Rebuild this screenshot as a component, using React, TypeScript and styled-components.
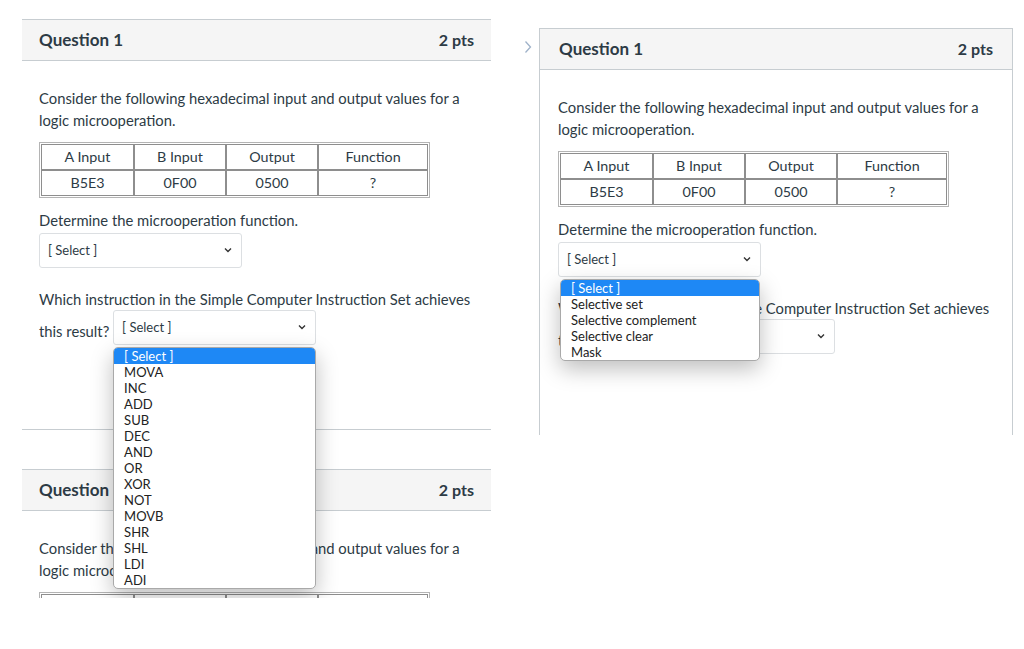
import styled, { createGlobalStyle } from "styled-components";

const GlobalStyle = createGlobalStyle`
  body {
    margin: 0;
    background: #ffffff;
  }
`;

const functionOptions = [
  "[ Select ]",
  "Selective set",
  "Selective complement",
  "Selective clear",
  "Mask",
];

const instructionOptions = [
  "[ Select ]",
  "MOVA",
  "INC",
  "ADD",
  "SUB",
  "DEC",
  "AND",
  "OR",
  "XOR",
  "NOT",
  "MOVB",
  "SHR",
  "SHL",
  "LDI",
  "ADI",
];

const Chevron = () => (
  <svg width="8" height="6" viewBox="0 0 8 6">
    <polyline
      points="1,1.5 4,4.5 7,1.5"
      fill="none"
      stroke="#333"
      strokeWidth="1.4"
    />
  </svg>
);

type SelectProps = {
  options?: string[];
  listOffset?: number;
  listWidth?: number;
  inline?: boolean;
};

const Select = ({ options, listOffset = 0, listWidth, inline }: SelectProps) => (
  <SelectWrap $inline={inline}>
    <SelectBox>
      <span>[ Select ]</span>
      <Chevron />
    </SelectBox>
    {options && (
      <OptionList $left={listOffset} $width={listWidth}>
        {options.map((o, i) => (
          <OptionItem key={o} $active={i === 0}>
            {o}
          </OptionItem>
        ))}
      </OptionList>
    )}
  </SelectWrap>
);

const ValuesTable = () => (
  <Table>
    <colgroup>
      <col style={{ width: 93 }} />
      <col style={{ width: 92 }} />
      <col style={{ width: 92 }} />
      <col style={{ width: 110 }} />
    </colgroup>
    <tbody>
      <tr>
        <Cell>A Input</Cell>
        <Cell>B Input</Cell>
        <Cell>Output</Cell>
        <Cell>Function</Cell>
      </tr>
      <tr>
        <Cell>B5E3</Cell>
        <Cell>0F00</Cell>
        <Cell>0500</Cell>
        <Cell>?</Cell>
      </tr>
    </tbody>
  </Table>
);

type QuestionProps = {
  framed?: boolean;
  openFunction?: boolean;
  openInstruction?: boolean;
};

const QuestionOne = ({ framed, openFunction, openInstruction }: QuestionProps) => (
  <Panel $framed={framed}>
    <Header $pad={framed ? 19 : 17}>
      <Title>Question 1</Title>
      <Points>2 pts</Points>
    </Header>
    <Body $pad={framed ? 18 : 17}>
      <Text>
        Consider the following hexadecimal input and output values for a
        logic microoperation.
      </Text>
      <ValuesTable />
      <Prompt>Determine the microoperation function.</Prompt>
      <Select
        options={openFunction ? functionOptions : undefined}
        listOffset={2}
        listWidth={200}
      />
      <Question>
        Which instruction in the Simple Computer Instruction Set achieves
        this result?{" "}
        <Select
          inline
          options={openInstruction ? instructionOptions : undefined}
        />
      </Question>
    </Body>
  </Panel>
);

export default function App() {
  return (
    <>
      <GlobalStyle />
      <Page>
        <LeftShot>
          <QuestionOne openInstruction />
          <NextPanel>
            <Header $pad={17}>
              <Title>Question 2</Title>
              <Points>2 pts</Points>
            </Header>
            <Body $pad={17}>
              <Text>
                Consider the following hexadecimal input and output values for
                a logic microoperation.
              </Text>
              <ValuesTable />
            </Body>
          </NextPanel>
        </LeftShot>
        <RightShot>
          <Expander>
            <svg width="8" height="14" viewBox="0 0 8 14">
              <polyline
                points="1.5,1.5 6.5,7 1.5,12.5"
                fill="none"
                stroke="#9fb2c9"
                strokeWidth="1.3"
              />
            </svg>
          </Expander>
          <QuestionOne framed openFunction />
        </RightShot>
      </Page>
    </>
  );
}

const Page = styled.div`
  display: flex;
  align-items: flex-start;
  font-family: Lato, "Open Sans", sans-serif;
  color: #2d3b45;
`;

const LeftShot = styled.div`
  margin: 19px 0 0 22px;
  width: 469px;
  height: 579px;
  overflow: hidden;
`;

const RightShot = styled.div`
  display: flex;
  margin: 28px 0 0 24px;
  height: 407px;
  overflow: hidden;
`;

const Expander = styled.div`
  width: 24px;
  padding: 10px 0 0 9px;
  box-sizing: border-box;
`;

const Panel = styled.section<{ $framed?: boolean }>`
  width: ${(p) => (p.$framed ? "474px" : "469px")};
  box-sizing: border-box;
  border-top: 1px solid #c7cdd1;
  border-bottom: ${(p) => (p.$framed ? "none" : "1px solid #c7cdd1")};
  border-left: ${(p) => (p.$framed ? "1px solid #c7cdd1" : "none")};
  border-right: ${(p) => (p.$framed ? "1px solid #c7cdd1" : "none")};
  min-height: ${(p) => (p.$framed ? "420px" : "auto")};
`;

const NextPanel = styled.section`
  margin-top: 39px;
  border-top: 1px solid #c7cdd1;
`;

const Header = styled.div<{ $pad: number }>`
  display: flex;
  align-items: center;
  justify-content: space-between;
  height: 41px;
  box-sizing: border-box;
  padding: 0 ${(p) => p.$pad}px 2px;
  background: #f5f5f5;
  border-bottom: 1px solid #c7cdd1;
`;

const Title = styled.h2`
  margin: 0;
  font-size: 17px;
  font-weight: 700;
`;

const Points = styled.span`
  font-size: 16px;
  font-weight: 700;
`;

const Body = styled.div<{ $pad: number }>`
  padding: 26px ${(p) => p.$pad}px 84px;
  font-size: 14.8px;
  line-height: 22px;
`;

const Text = styled.p`
  margin: 0;
`;

const Prompt = styled.p`
  margin: 11px 0 2px;
`;

const Question = styled.p`
  margin: 20px 0 0;
`;

const Table = styled.table`
  margin-top: 11px;
  width: 391px;
  table-layout: fixed;
  border-collapse: separate;
  border-spacing: 0;
  border: 1px solid #b4b4b4;
  padding: 1px;
  box-sizing: border-box;
`;

const Cell = styled.td`
  height: 24px;
  padding: 0;
  border: 1px solid #8e8e8e;
  text-align: center;
  font-size: 14.3px;
`;

const SelectWrap = styled.span<{ $inline?: boolean }>`
  position: relative;
  display: inline-block;
  vertical-align: ${(p) => (p.$inline ? "5px" : "baseline")};
`;

const SelectBox = styled.span`
  display: flex;
  align-items: center;
  justify-content: space-between;
  width: 203px;
  height: 35px;
  box-sizing: border-box;
  padding: 0 9px 2px 8px;
  border: 1px solid #dcdfe2;
  border-radius: 3px;
  background: #ffffff;
  font-size: 13px;
`;

const OptionList = styled.span<{ $left: number; $width?: number }>`
  position: absolute;
  z-index: 10;
  top: calc(100% + 2px);
  left: ${(p) => p.$left}px;
  width: ${(p) => (p.$width ? `${p.$width}px` : "100%")};
  box-sizing: border-box;
  display: flex;
  flex-direction: column;
  border: 1px solid #a9a9a9;
  border-radius: 5px;
  overflow: hidden;
  background: #ffffff;
  box-shadow: 0 8px 22px rgba(0, 0, 0, 0.26);
  font-size: 13px;
  line-height: 16px;
  color: #222222;
`;

const OptionItem = styled.span<{ $active?: boolean }>`
  padding: 0 10px;
  white-space: nowrap;
  background: ${(p) => (p.$active ? "#1e88f5" : "transparent")};
  color: ${(p) => (p.$active ? "#ffffff" : "inherit")};
`;
